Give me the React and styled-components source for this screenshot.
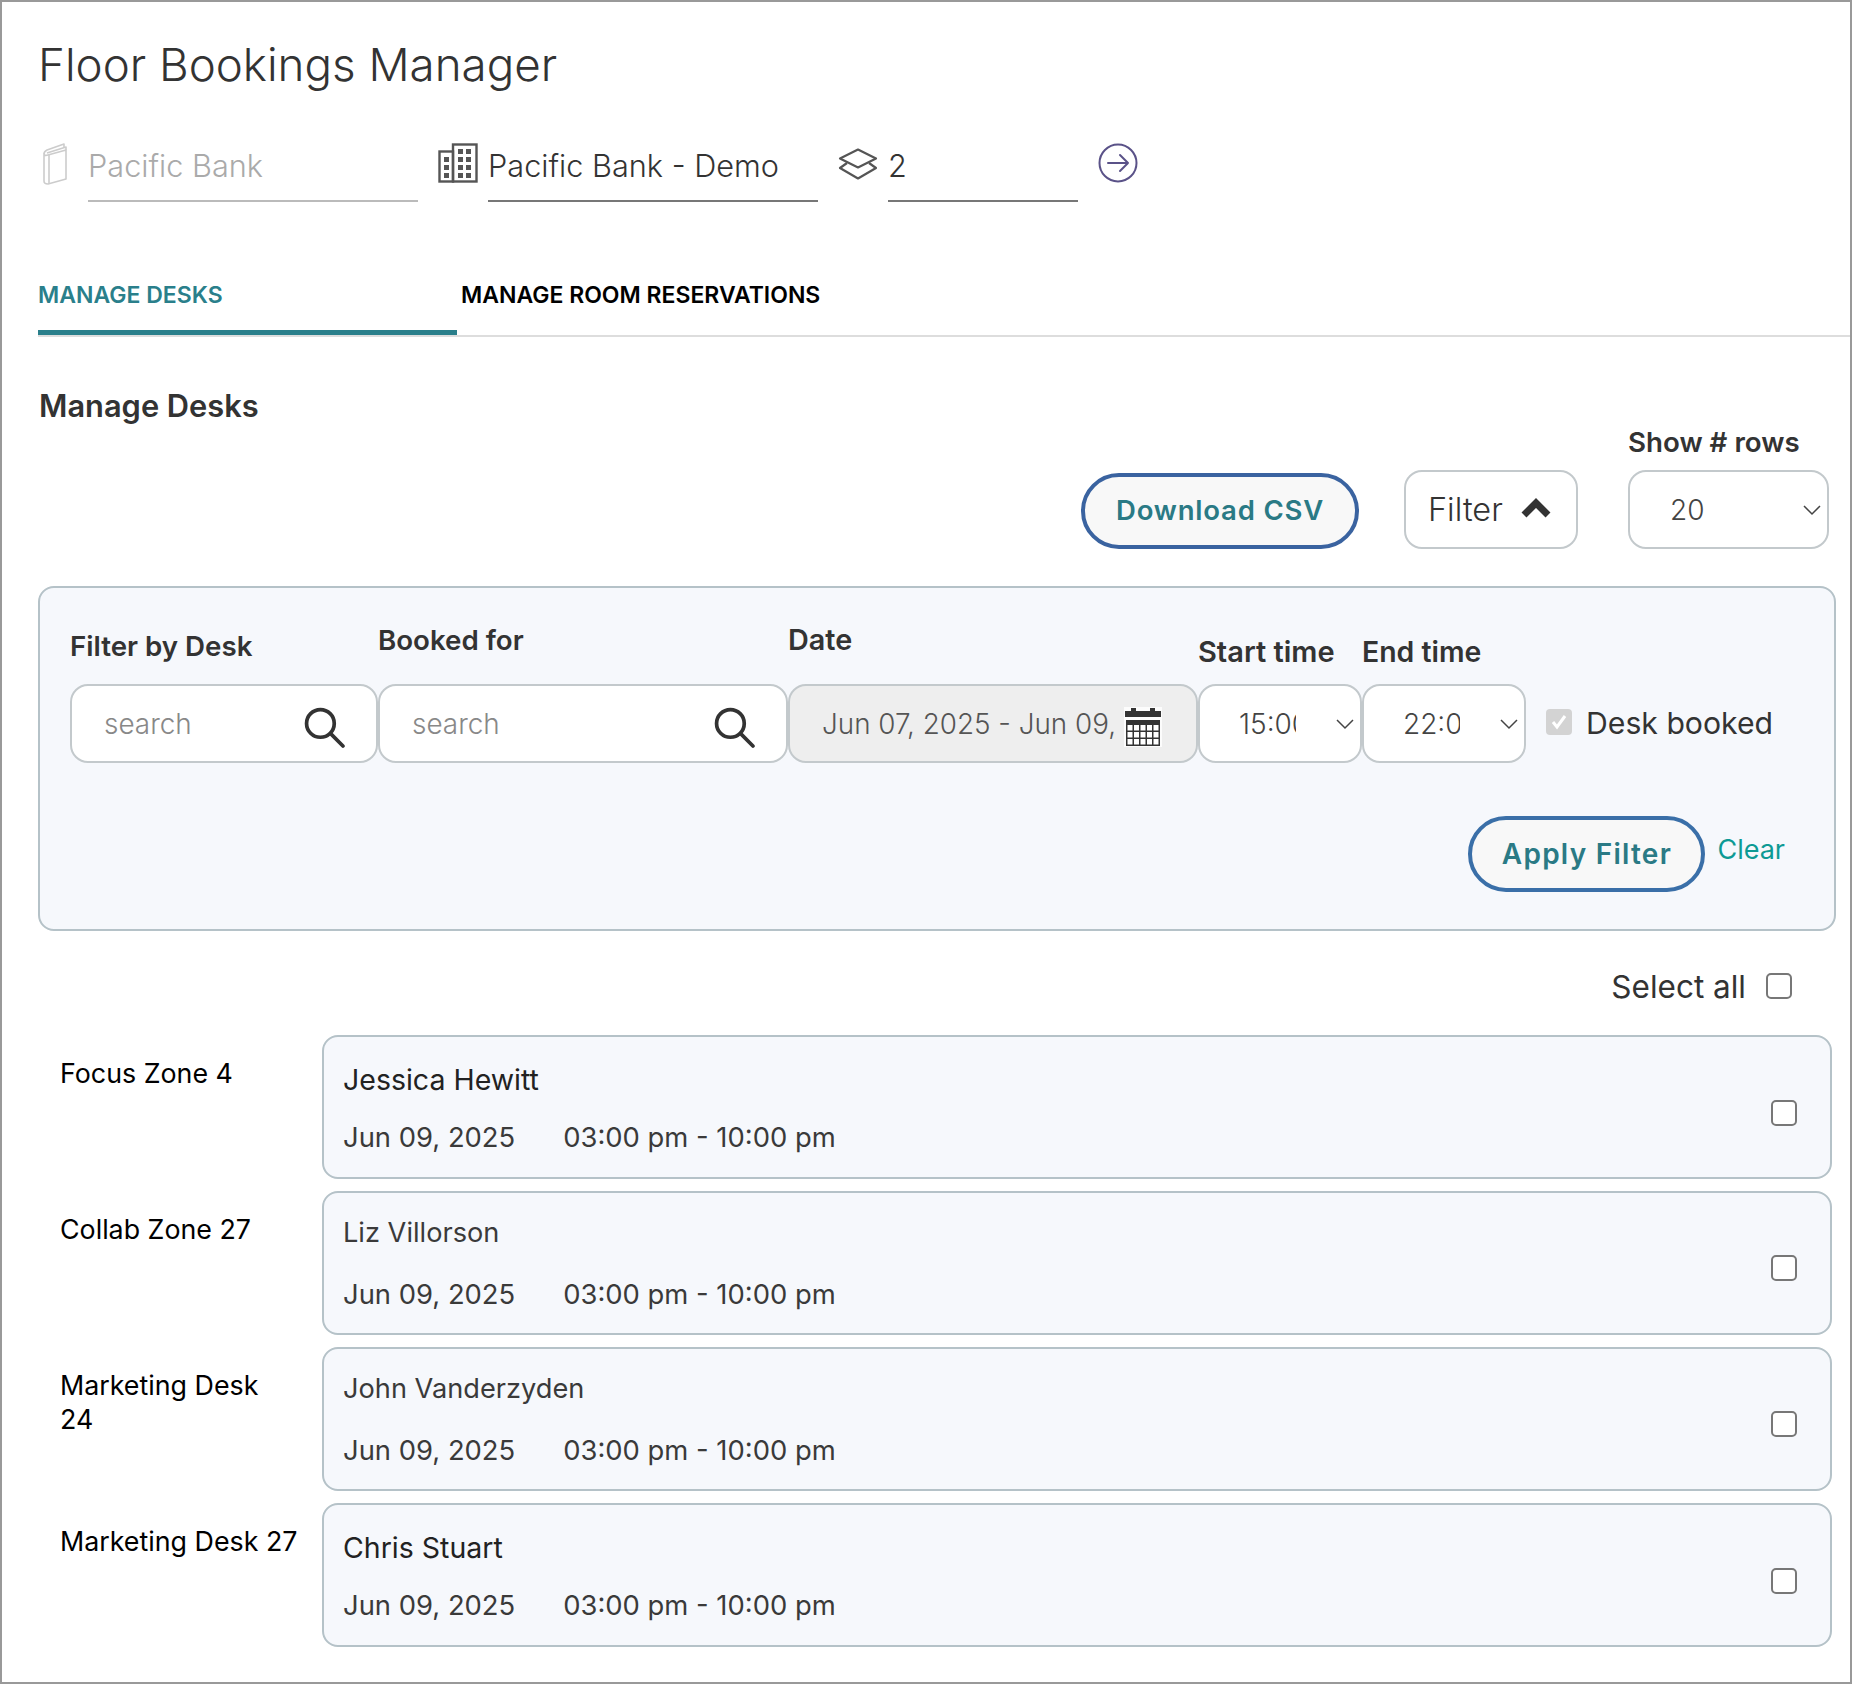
import React from "react";
import styled, { createGlobalStyle } from "styled-components";

const GlobalStyle = createGlobalStyle`
  html, body {
    margin: 0;
    padding: 0;
    background: #fff;
  }
  body {
    font-family: "Inter", "Noto Sans", sans-serif;
    color: #333;
  }
`;

const Page = styled.div`
  box-sizing: border-box;
  width: 1852px;
  height: 1684px;
  border: 2px solid #999;
  overflow: hidden;
`;

const Title = styled.h1`
  margin: 35px 0 0 36px;
  font-size: 45.7px;
  line-height: 56px;
  font-weight: 300;
  color: #333;
`;

const Crumbs = styled.div`
  display: flex;
  align-items: flex-start;
  gap: 20px;
  margin: 50px 0 0 40px;
`;

const Crumb = styled.div`
  display: flex;
  align-items: flex-start;
`;

const CrumbIcon = styled.div`
  width: ${(p) => p.$w}px;
  margin-top: ${(p) => p.$top || 0}px;
  color: ${(p) => p.$color || "#555"};
  line-height: 0;
`;

const CrumbField = styled.div`
  box-sizing: border-box;
  width: ${(p) => p.$w}px;
  height: 59px;
  padding-top: 5px;
  border-bottom: 2px solid ${(p) => (p.$muted ? "#bbb" : "#777")};
  color: ${(p) => (p.$muted ? "#aaa" : "#333")};
  font-size: 30.7px;
  font-weight: 300;
  line-height: 36px;
`;

const ArrowButton = styled.div`
  line-height: 0;
  color: #5a5288;
`;

const Tabs = styled.div`
  display: flex;
  margin: 79px 0 0 36px;
  border-bottom: 2px solid #ddd;
`;

const Tab = styled.div`
  box-sizing: border-box;
  width: ${(p) => p.$w}px;
  height: 54px;
  padding-left: ${(p) => p.$pad || 0}px;
  font-size: 23px;
  font-weight: 600;
  line-height: 28px;
  color: ${(p) => (p.$active ? "#2a7f8b" : "#000")};
  border-bottom: ${(p) => (p.$active ? "5px solid #2a7f8b" : "none")};
`;

const Heading = styled.h2`
  margin: 51px 0 0 37px;
  font-size: 30.8px;
  line-height: 36px;
  font-weight: 600;
  color: #333;
`;

const Toolbar = styled.div`
  display: flex;
  justify-content: flex-end;
  align-items: flex-end;
  padding-right: 21px;
  margin-top: 1px;
`;

const PillButton = styled.button`
  box-sizing: border-box;
  width: ${(p) => p.$w}px;
  height: ${(p) => p.$h}px;
  border: 4px solid ${(p) => p.$line};
  border-radius: 40px;
  background: #f8f8f8;
  color: #2a7a85;
  font-family: inherit;
  font-size: ${(p) => p.$size}px;
  font-weight: 600;
  letter-spacing: ${(p) => p.$track}px;
  padding: 0 0 ${(p) => p.$lift || 0}px;
`;

const FilterToggle = styled.button`
  box-sizing: border-box;
  display: flex;
  align-items: center;
  width: 174px;
  height: 79px;
  margin-left: 45px;
  padding: 0 0 0 22px;
  background: #fff;
  border: 2px solid #c3c9cc;
  border-radius: 18px;
  font-family: inherit;
  font-size: 32.5px;
  font-weight: 300;
  color: #333;
  svg {
    margin: -4px 0 0 18px;
  }
`;

const RowsColumn = styled.div`
  margin-left: 50px;
`;

const FieldLabel = styled.div`
  font-size: ${(p) => p.$size || 27.7}px;
  line-height: 34px;
  font-weight: 600;
  color: #333;
  margin-bottom: ${(p) => p.$gap}px;
  white-space: nowrap;
`;

const BaseBox = styled.div`
  box-sizing: border-box;
  position: relative;
  display: flex;
  align-items: center;
  width: ${(p) => p.$w}px;
  height: 79px;
  background: ${(p) => (p.$disabled ? "#eee" : "#fff")};
  border: 2px solid #c3c9cc;
  border-radius: 18px;
`;

const SelectValue = styled.div`
  width: ${(p) => p.$clip}px;
  margin-left: ${(p) => p.$left}px;
  overflow: hidden;
  white-space: nowrap;
  font-size: 28px;
  font-weight: 300;
  color: #444;
`;

const Chevron = styled.svg`
  position: absolute;
  right: 6px;
  top: 33px;
`;

const Panel = styled.div`
  box-sizing: border-box;
  width: 1798px;
  height: 345px;
  margin: 37px 0 0 36px;
  padding-left: 30px;
  background: #f6f8fc;
  border: 2px solid #b5c2c8;
  border-radius: 16px;
`;

const FilterRow = styled.div`
  display: flex;
  align-items: flex-end;
  height: 175px;
`;

const SearchInput = styled.input`
  width: ${(p) => p.$w}px;
  margin-left: 32px;
  border: 0;
  outline: 0;
  background: transparent;
  font-family: inherit;
  font-size: 27.9px;
  font-weight: 300;
  padding: 0;
  &::placeholder {
    color: #888;
    opacity: 1;
  }
`;

const SearchIcon = styled.svg`
  position: absolute;
  right: 31px;
  top: 21px;
`;

const DateText = styled.div`
  width: 294px;
  margin-left: 32px;
  overflow: hidden;
  white-space: nowrap;
  font-size: 27.8px;
  font-weight: 300;
  color: #555;
`;

const CalendarIcon = styled.svg`
  position: absolute;
  right: 34px;
  top: 21px;
`;

const BookedCheck = styled.div`
  display: flex;
  align-items: center;
  align-self: flex-end;
  box-sizing: border-box;
  height: 79px;
  padding-bottom: 2px;
  margin-left: 20px;
  font-size: 30.2px;
  font-weight: 400;
  color: #333;
  white-space: nowrap;
`;

const GreyCheck = styled.span`
  box-sizing: border-box;
  display: flex;
  align-items: center;
  justify-content: center;
  width: 26px;
  height: 26px;
  margin: -2px 14px 0 0;
  background: #d3d3d3;
  border-radius: 4px;
`;

const FilterActions = styled.div`
  display: flex;
  justify-content: flex-end;
  align-items: flex-start;
  padding-right: 49px;
  margin-top: 53px;
`;

const ClearLink = styled.a`
  margin: 17px 0 0 12px;
  font-size: 27px;
  line-height: 34px;
  font-weight: 400;
  color: #0d9a94;
`;

const SelectAll = styled.div`
  display: flex;
  justify-content: flex-end;
  align-items: center;
  height: 40px;
  margin-top: 35px;
  padding-right: 58px;
  font-size: 31.5px;
  font-weight: 400;
  color: #333;
`;

const Box = styled.input.attrs({ type: "checkbox" })`
  appearance: none;
  box-sizing: border-box;
  width: 26px;
  height: 26px;
  margin: ${(p) => p.$margin || 0};
  background: #fff;
  border: 2px solid #777;
  border-radius: 5px;
  flex: none;
`;

const Rows = styled.div`
  display: flex;
  flex-direction: column;
  gap: 12px;
  margin: 29px 18px 0 36px;
`;

const Row = styled.div`
  display: flex;
`;

const DeskName = styled.div`
  box-sizing: border-box;
  width: 284px;
  padding: 21px ${(p) => (p.$narrow ? 60 : 20)}px 0 22px;
  font-size: 26.8px;
  line-height: 34px;
  font-weight: 400;
  color: #000;
`;

const Card = styled.div`
  box-sizing: border-box;
  display: flex;
  align-items: center;
  justify-content: space-between;
  flex: 1;
  height: 144px;
  padding: ${(p) => (p.$large ? 2 : 0)}px 33px 0 19px;
  background: #f6f8fc;
  border: 2px solid #b5c2c8;
  border-radius: 16px;
`;

const BookedFor = styled.div`
  font-size: ${(p) => (p.$large ? 28.5 : 27.2)}px;
  line-height: 36px;
  font-weight: 400;
  color: ${(p) => (p.$large ? "#222" : "#3a3a3a")};
`;

const When = styled.div`
  display: flex;
  gap: 48px;
  margin-top: ${(p) => (p.$large ? 21 : 25)}px;
  font-size: 27.4px;
  line-height: 36px;
  font-weight: 400;
  color: #3a3a3a;
`;

const bookings = [
  { desk: "Focus Zone 4", name: "Jessica Hewitt", large: true },
  { desk: "Collab Zone 27", name: "Liz Villorson" },
  { desk: "Marketing Desk 24", name: "John Vanderzyden", narrow: true },
  { desk: "Marketing Desk 27", name: "Chris Stuart", large: true },
];

const BookIcon = () => (
  <svg width="26" height="42" viewBox="0 0 26 42" fill="none" stroke="currentColor" strokeWidth="1.6" strokeLinejoin="round">
    <path d="M2 11v27c0 2 1 3 4 3l18-5V7L6 12c-3 1-4 0-4-1z" />
    <path d="M2 11c0-2 1-3 3-4l17-6v4" />
    <path d="M5 10l19-6v3" />
    <path d="M7 12v28" />
  </svg>
);

const BuildingIcon = () => (
  <svg width="40" height="40" viewBox="0 0 40 40" fill="none">
    <rect x="15" y="1.5" width="23.5" height="37" stroke="currentColor" strokeWidth="2.4" />
    <rect x="1.5" y="8.5" width="13.5" height="30" stroke="currentColor" strokeWidth="2.4" />
    {[14, 22, 30].map((y) => (
      <rect key={y} x="6" y={y} width="5" height="5" fill="currentColor" />
    ))}
    {[6, 14, 22, 30].map((y) => (
      <g key={y} fill="currentColor">
        <rect x="20" y={y} width="5" height="5" />
        <rect x="28" y={y} width="5" height="5" />
      </g>
    ))}
  </svg>
);

const LayersIcon = () => (
  <svg width="40" height="32" viewBox="0 0 40 32" fill="none" stroke="currentColor" strokeWidth="2.2" strokeLinejoin="round">
    <path d="M20 1.5L38 10.5 20 19.5 2 10.5z" />
    <path d="M9 15L2 20 20 30.5 38 20 31 15" />
  </svg>
);

const ArrowIcon = () => (
  <svg width="40" height="40" viewBox="0 0 40 40" fill="none" stroke="currentColor" strokeWidth="2" strokeLinecap="round" strokeLinejoin="round">
    <circle cx="20" cy="20" r="18.5" />
    <path d="M10 20h20M22 12l8 8-8 8" />
  </svg>
);

const Magnifier = () => (
  <SearchIcon width="41" height="41" viewBox="0 0 40 40" fill="none" stroke="#333" strokeWidth="3.6" strokeLinecap="round">
    <circle cx="16" cy="16" r="13.5" />
    <path d="M26 26l12 12" />
  </SearchIcon>
);

const SmallChevron = () => (
  <Chevron width="18" height="11" viewBox="0 0 18 11" fill="none" stroke="#444" strokeWidth="1.5">
    <path d="M1 1l8 8 8-8" />
  </Chevron>
);

const Calendar = () => (
  <CalendarIcon width="38" height="40" viewBox="0 0 38 40">
    <rect width="38" height="40" fill="#fff" opacity="0.8" />
    <path d="M1 4h6V1h5v3h14V1h5v3h6v6H1z" fill="#333" />
    <rect x="2" y="13" width="34" height="26" fill="#333" />
    {[18, 25, 32].map((y) =>
      [3.5, 10, 16.5, 23, 29.5].map((x) => (
        <rect key={`${x}-${y}`} x={x} y={y} width="5" height="5.5" fill="#fff" />
      ))
    )}
  </CalendarIcon>
);

const App = () => (
  <Page>
    <GlobalStyle />
    <Title>Floor Bookings Manager</Title>

    <Crumbs>
      <Crumb>
        <CrumbIcon $w={46} $color="#ccc">
          <BookIcon />
        </CrumbIcon>
        <CrumbField $w={330} $muted>
          Pacific Bank
        </CrumbField>
      </Crumb>
      <Crumb>
        <CrumbIcon $w={50}>
          <BuildingIcon />
        </CrumbIcon>
        <CrumbField $w={330}>Pacific Bank - Demo</CrumbField>
      </Crumb>
      <Crumb>
        <CrumbIcon $w={50} $top={5}>
          <LayersIcon />
        </CrumbIcon>
        <CrumbField $w={190}>2</CrumbField>
      </Crumb>
      <ArrowButton>
        <ArrowIcon />
      </ArrowButton>
    </Crumbs>

    <Tabs>
      <Tab $active $w={419}>
        MANAGE DESKS
      </Tab>
      <Tab $w={400} $pad={4}>
        MANAGE ROOM RESERVATIONS
      </Tab>
    </Tabs>

    <Heading>Manage Desks</Heading>

    <Toolbar>
      <PillButton $w={278} $h={76} $line="#3a63a0" $size={27.5} $track={0.8} $lift={2}>
        Download CSV
      </PillButton>
      <FilterToggle>
        Filter
        <svg width="30" height="20" viewBox="0 0 30 20" fill="none" stroke="#333" strokeWidth="7">
          <path d="M3 17L15 5l12 12" />
        </svg>
      </FilterToggle>
      <RowsColumn>
        <FieldLabel $gap={11}>Show # rows</FieldLabel>
        <BaseBox $w={201}>
          <SelectValue $left={40} $clip={100}>
            20
          </SelectValue>
          <SmallChevron />
        </BaseBox>
      </RowsColumn>
    </Toolbar>

    <Panel>
      <FilterRow>
        <div>
          <FieldLabel $gap={21}>Filter by Desk</FieldLabel>
          <BaseBox $w={308}>
            <SearchInput $w={150} placeholder="search" />
            <Magnifier />
          </BaseBox>
        </div>
        <div>
          <FieldLabel $gap={27}>Booked for</FieldLabel>
          <BaseBox $w={410}>
            <SearchInput $w={200} placeholder="search" />
            <Magnifier />
          </BaseBox>
        </div>
        <div>
          <FieldLabel $gap={27} $size={28.8}>
            Date
          </FieldLabel>
          <BaseBox $w={410} $disabled>
            <DateText>Jun 07, 2025 - Jun 09, 2025</DateText>
            <Calendar />
          </BaseBox>
        </div>
        <div>
          <FieldLabel $gap={15} $size={29}>
            Start time
          </FieldLabel>
          <BaseBox $w={164}>
            <SelectValue $left={39} $clip={57}>
              15:00
            </SelectValue>
            <SmallChevron />
          </BaseBox>
        </div>
        <div>
          <FieldLabel $gap={15} $size={28.4}>
            End time
          </FieldLabel>
          <BaseBox $w={164}>
            <SelectValue $left={39} $clip={57}>
              22:00
            </SelectValue>
            <SmallChevron />
          </BaseBox>
        </div>
        <BookedCheck>
          <GreyCheck>
            <svg width="16" height="16" viewBox="0 0 16 16" fill="none" stroke="#fff" strokeWidth="3">
              <path d="M2 8l4 5 8-11" />
            </svg>
          </GreyCheck>
          Desk booked
        </BookedCheck>
      </FilterRow>
      <FilterActions>
        <PillButton $w={237} $h={76} $line="#3a6fa8" $size={28} $track={1.25}>
          Apply Filter
        </PillButton>
        <ClearLink>Clear</ClearLink>
      </FilterActions>
    </Panel>

    <SelectAll>
      Select all
      <Box $margin="0 0 0 20px" />
    </SelectAll>

    <Rows>
      {bookings.map((b) => (
        <Row key={b.desk}>
          <DeskName $narrow={b.narrow}>{b.desk}</DeskName>
          <Card $large={b.large}>
            <div>
              <BookedFor $large={b.large}>{b.name}</BookedFor>
              <When $large={b.large}>
                <span>Jun 09, 2025</span>
                <span>03:00 pm - 10:00 pm</span>
              </When>
            </div>
            <Box $margin="9px 0 0" />
          </Card>
        </Row>
      ))}
    </Rows>
  </Page>
);

export default App;
